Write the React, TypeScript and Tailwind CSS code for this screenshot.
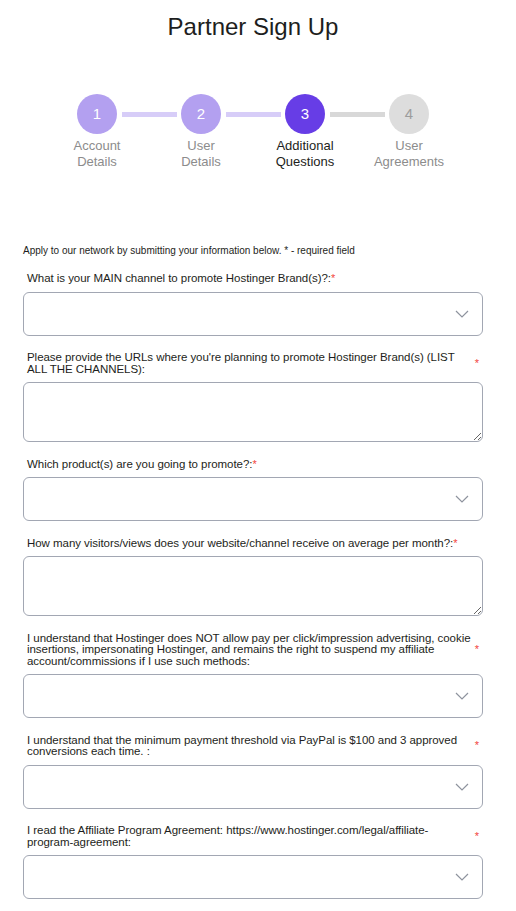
import React from "react";

const font = { fontFamily: '"Liberation Sans", Arial, sans-serif' };

type Field = { label: string; kind: "select" | "textarea" };

const fields: Field[] = [
  { label: "What is your MAIN channel to promote Hostinger Brand(s)?:", kind: "select" },
  {
    label: "Please provide the URLs where you're planning to promote Hostinger Brand(s) (LIST ALL THE CHANNELS):",
    kind: "textarea",
  },
  { label: "Which product(s) are you going to promote?:", kind: "select" },
  { label: "How many visitors/views does your website/channel receive on average per month?:", kind: "textarea" },
  {
    label:
      "I understand that Hostinger does NOT allow pay per click/impression advertising, cookie insertions, impersonating Hostinger, and remains the right to suspend my affiliate account/commissions if I use such methods:",
    kind: "select",
  },
  {
    label: "I understand that the minimum payment threshold via PayPal is $100 and 3 approved conversions each time. :",
    kind: "select",
  },
  {
    label: "I read the Affiliate Program Agreement: https://www.hostinger.com/legal/affiliate-program\u2011agreement:",
    kind: "select",
  },
];

function Chevron() {
  return (
    <svg width="14" height="8" viewBox="0 0 14 8" fill="none">
      <polyline points="1,1 7,7 13,1" stroke="#8e939e" strokeWidth="1.2" fill="none" />
    </svg>
  );
}

function Steps() {
  const steps = [
    { n: 1, l1: "Account", l2: "Details", state: "done" },
    { n: 2, l1: "User", l2: "Details", state: "done" },
    { n: 3, l1: "Additional", l2: "Questions", state: "active" },
    { n: 4, l1: "User", l2: "Agreements", state: "todo" },
  ];
  return (
    <div className="flex flex-col items-center mt-[53px]">
      <div className="flex items-center">
        {steps.map((s, i) => (
          <React.Fragment key={s.n}>
            <div
              className={
                "w-[40px] h-[40px] rounded-full flex items-center justify-center text-[15px] " +
                (s.state === "done"
                  ? "bg-[#b3a0f0] text-white"
                  : s.state === "active"
                  ? "bg-[#673de6] text-white"
                  : "bg-[#dddddd] text-[#9c9c9c]")
              }
            >
              {s.n}
            </div>
            {i < 3 && (
              <div
                className={
                  "w-[55px] h-[5px] mx-[4.5px] " + (i < 2 ? "bg-[#d7cdf8]" : "bg-[#d8d8d8]")
                }
              />
            )}
          </React.Fragment>
        ))}
      </div>
      <div className="grid grid-cols-[104px_104px_104px_104px] mt-[4px]">
        {steps.map((s) => (
          <div
            key={s.n}
            className={
              "text-center text-[13px] leading-[16px] " +
              (s.state === "active" ? "text-[#1d1e20]" : "text-[#8c8c8c]")
            }
          >
            <div>{s.l1}</div>
            <div>{s.l2}</div>
          </div>
        ))}
      </div>
    </div>
  );
}

export default function App() {
  return (
    <div className="w-[506px] bg-white min-h-[911px] text-[#1d1e20]" style={font}>
      <h1 className="text-center text-[24px] leading-[28px] pt-[13px] font-normal text-[#1d1e20]">
        Partner Sign Up
      </h1>
      <Steps />
      <div className="px-[23px]">
        <p className="mt-[75px] text-[10px] leading-[12px] text-[#1d1e20]">
          Apply to our network by submitting your information below. * - required field
        </p>
        <div className="mt-[16px] flex flex-col gap-[16.5px]">
          {fields.map((f, i) => (
            <div key={i} className="flex flex-col">
              <div className="flex items-center px-[4px] mb-[7px]">
                <span className="max-w-[450px] text-[11.5px] leading-[11.5px] tracking-[-0.05px] text-[#1d1e20]">
                  {f.label}
                </span>
                <span className="text-[#f2453d] text-[11px] leading-[11.5px] shrink-0">*</span>
              </div>
              {f.kind === "select" ? (
                <div className="h-[44px] border border-[#a2a7b3] rounded-[6px] flex items-center justify-end pr-[13px] bg-white">
                  <Chevron />
                </div>
              ) : (
                <textarea className="block h-[60px] w-full border border-[#a2a7b3] rounded-[6px] bg-white outline-none" />
              )}
            </div>
          ))}
        </div>
      </div>
    </div>
  );
}
